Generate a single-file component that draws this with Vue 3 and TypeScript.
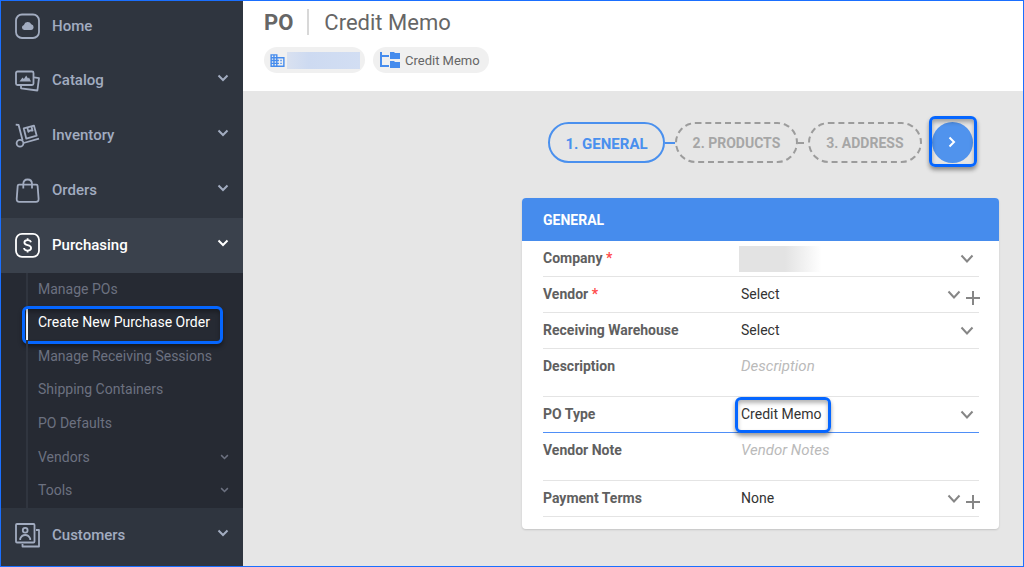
<script setup lang="ts">
import { ref } from 'vue'

type IconName = 'home' | 'catalog' | 'inventory' | 'orders' | 'purchasing' | 'customers'

interface SubItem {
  label: string
  expandable?: boolean
  current?: boolean
}

interface NavItem {
  label: string
  icon: IconName
  expandable: boolean
  children?: SubItem[]
}

interface Field {
  id: string
  label: string
  kind: 'select' | 'note'
  value: string
  required?: boolean
  addable?: boolean
  masked?: boolean
  focused?: boolean
}

const nav: NavItem[] = [
  { label: 'Home', icon: 'home', expandable: false },
  { label: 'Catalog', icon: 'catalog', expandable: true },
  { label: 'Inventory', icon: 'inventory', expandable: true },
  { label: 'Orders', icon: 'orders', expandable: true },
  {
    label: 'Purchasing',
    icon: 'purchasing',
    expandable: true,
    children: [
      { label: 'Manage POs' },
      { label: 'Create New Purchase Order', current: true },
      { label: 'Manage Receiving Sessions' },
      { label: 'Shipping Containers' },
      { label: 'PO Defaults' },
      { label: 'Vendors', expandable: true },
      { label: 'Tools', expandable: true },
    ],
  },
  { label: 'Customers', icon: 'customers', expandable: true },
]

const steps = ['1. GENERAL', '2. PRODUCTS', '3. ADDRESS']
const step = ref(0)

const fields: Field[] = [
  { id: 'company', label: 'Company', kind: 'select', value: '', required: true, masked: true },
  { id: 'vendor', label: 'Vendor', kind: 'select', value: 'Select', required: true, addable: true },
  { id: 'warehouse', label: 'Receiving Warehouse', kind: 'select', value: 'Select' },
  { id: 'description', label: 'Description', kind: 'note', value: 'Description' },
  { id: 'po-type', label: 'PO Type', kind: 'select', value: 'Credit Memo', focused: true },
  { id: 'vendor-note', label: 'Vendor Note', kind: 'note', value: 'Vendor Notes' },
  { id: 'terms', label: 'Payment Terms', kind: 'select', value: 'None', addable: true },
]

function next(): void {
  step.value = Math.min(step.value + 1, steps.length - 1)
}
</script>

<template>
  <div class="app">
    <nav class="sidebar">
      <template v-for="item in nav" :key="item.label">
        <a href="#" class="nav-item" :class="{ open: item.children, home: item.icon === 'home' }">
          <svg class="nav-icon" viewBox="0 0 26 27" aria-hidden="true">
            <template v-if="item.icon === 'home'">
              <rect x="2" y="1.5" width="23" height="23.5" rx="6" />
              <path class="solid" d="M10.2 17a2.6 2.6 0 0 1-.3-5.1 4 4 0 0 1 7.4-.6 2.9 2.9 0 0 1-.1 5.7z" />
            </template>
            <template v-else-if="item.icon === 'catalog'">
              <rect x="2" y="4.5" width="17.5" height="13.5" rx="1.5" />
              <path d="M20 10.3l5 .9-1.6 12.3L7 21.3v-3" />
              <path class="solid" d="M5.5 14.5l3-4 1.4 1.5 2.3-3.5 1.8 3 1-1 2 4z" />
            </template>
            <template v-else-if="item.icon === 'inventory'">
              <path d="M1.7 2.7l2.9.3 4 15.4" />
              <circle cx="6" cy="21.3" r="3.4" />
              <path d="M9.5 21L25 16.7M9.7 6.3L20 3.7l2.7 10-10.4 3z" />
              <path d="M13.3 5.6l1.1 4.2 1.8-1.5 2.4.4-1.2-4.2" />
            </template>
            <template v-else-if="item.icon === 'orders'">
              <path d="M5 7.7h17.3q1.2 0 1.3 1.2l1 13q.1 3-2.6 3H5.3q-2.7 0-2.6-3l1-13Q3.8 7.7 5 7.7z" />
              <path d="M9.3 11.5V7q0-4.5 4.3-4.5T18 7v4.5" />
            </template>
            <template v-else-if="item.icon === 'purchasing'">
              <rect x="2" y="1.8" width="23" height="23" rx="6" />
              <path d="M17 10.3q-.5-2.2-3.4-2.2-3.2 0-3.2 2.4 0 1.9 3.2 2.6 3.5.8 3.5 3 0 2.5-3.5 2.5-3.3 0-3.6-2.6M13.6 6.3v1.8M13.6 18.6v1.8" />
            </template>
            <template v-else>
              <rect x="2" y="2" width="18.5" height="18.5" rx="1" />
              <path d="M22 8h3v16.5H8.5V22" />
              <circle cx="11.2" cy="8.3" r="2.4" />
              <path d="M6.2 18v-1.3q1.5-3.7 5-3.7t5 3.7V18" />
            </template>
          </svg>
          <span class="nav-label">{{ item.label }}</span>
          <svg v-if="item.expandable" class="nav-chevron" viewBox="0 0 12 8" aria-hidden="true">
            <path d="M1.5 1.5L6 6l4.5-4.5" />
          </svg>
        </a>
        <ul v-if="item.children" class="submenu">
          <li v-for="sub in item.children" :key="sub.label" :class="{ current: sub.current }">
            <a href="#">
              <span>{{ sub.label }}</span>
              <svg v-if="sub.expandable" class="sub-chevron" viewBox="0 0 12 8" aria-hidden="true">
                <path d="M1.5 1.5L6 6l4.5-4.5" />
              </svg>
            </a>
          </li>
        </ul>
      </template>
    </nav>

    <div class="page">
      <header class="top">
        <h1><strong>PO</strong><span class="title">Credit Memo</span></h1>
        <div class="chips">
          <span class="chip company-chip">
            <svg class="building" viewBox="0 0 24 24" aria-hidden="true">
              <path d="M12 7V3H2v18h20V7H12zM6 19H4v-2h2v2zm0-4H4v-2h2v2zm0-4H4V9h2v2zm0-4H4V5h2v2zm4 12H8v-2h2v2zm0-4H8v-2h2v2zm0-4H8V9h2v2zm0-4H8V5h2v2zm10 12h-8v-2h2v-2h-2v-2h2v-2h-2V9h8v10zm-2-8h-2v2h2v-2zm0 4h-2v2h2v-2z" />
            </svg>
            <span class="chip-mask"></span>
          </span>
          <span class="chip">
            <svg class="tree" viewBox="0 0 20 18" aria-hidden="true">
              <path d="M0 1h2v3h7v2H2v8h7v2H0zM10 1h4l1 1h5v6H10zM10 10h4l1 1h5v6H10z" />
            </svg>
            <span>Credit Memo</span>
          </span>
        </div>
      </header>

      <main class="content">
        <div class="steps">
          <template v-for="(name, i) in steps" :key="name">
            <span v-if="i > 0" class="link" :class="{ done: i === 1 }"></span>
            <button type="button" class="step" :class="{ active: i === step }" @click="step = i">{{ name }}</button>
          </template>
          <div class="next-wrap">
            <button type="button" class="next" aria-label="Next" @click="next">
              <svg viewBox="0 0 8 12" aria-hidden="true"><path d="M1.5 1.5L6 6l-4.5 4.5" /></svg>
            </button>
          </div>
        </div>

        <section class="card">
          <h2>GENERAL</h2>
          <form class="fields" @submit.prevent>
            <div v-for="f in fields" :key="f.id" class="field" :class="[f.kind, { focused: f.focused }]">
              <label :for="f.id">{{ f.label }} <span v-if="f.required" class="star">*</span></label>
              <textarea v-if="f.kind === 'note'" :id="f.id" :placeholder="f.value"></textarea>
              <div v-else class="control">
                <div class="select-box">
                  <select :id="f.id">
                    <option>{{ f.value }}</option>
                  </select>
                  <span v-if="f.masked" class="mask"></span>
                  <svg class="chevron" viewBox="0 0 14 10" aria-hidden="true"><path d="M1.5 1.5L7 7.5l5.5-6" /></svg>
                </div>
                <button v-if="f.addable" type="button" class="add" :aria-label="'Add ' + f.label">
                  <svg viewBox="0 0 14 14" aria-hidden="true"><path d="M7 0v14M0 7h14" /></svg>
                </button>
              </div>
            </div>
          </form>
        </section>
      </main>
    </div>
  </div>
</template>

<style>
body {
  margin: 0;
}
</style>

<style scoped>
.app,
.app *,
.app *::after {
  box-sizing: border-box;
}

.app {
  display: grid;
  grid-template-columns: 242px 1fr;
  min-height: 100vh;
  border: 1px solid #1a6fff;
  font-family: Roboto, "Liberation Sans", sans-serif;
  font-size: 14px;
  background: #e6e6e6;
}

button,
select,
textarea {
  font: inherit;
  margin: 0;
}

svg {
  flex: none;
}

.sidebar {
  background: #2f353f;
}

.nav-item {
  display: flex;
  align-items: center;
  gap: 12px;
  height: 55px;
  padding: 0 14px 0 13px;
  color: #a2acc0;
  font-size: 15px;
  font-weight: 500;
  line-height: 20px;
  text-decoration: none;
}

.nav-item.home {
  height: 51px;
  margin-bottom: 1px;
}

.nav-item.open {
  background: #3a414c;
  color: #fff;
}

.nav-label {
  padding-bottom: 2px;
}

.nav-icon {
  width: 26px;
  height: 27px;
  fill: none;
  stroke: currentColor;
  stroke-width: 1.8;
  stroke-linejoin: round;
}

.nav-icon .solid {
  fill: currentColor;
  stroke: none;
}

.nav-chevron,
.sub-chevron {
  width: 12px;
  height: 8px;
  margin: 0 0 5px auto;
  fill: none;
  stroke: currentColor;
  stroke-width: 2;
}

.submenu {
  display: grid;
  grid-auto-rows: 1fr;
  min-height: 235px;
  margin: 0;
  padding: 0 0 0 25px;
  list-style: none;
  background: #262a33;
}

.submenu li {
  position: relative;
  border-left: 2px solid #30353f;
}

.submenu a {
  display: flex;
  align-items: center;
  height: 100%;
  padding: 0 14px 2px 10px;
  color: #6c7180;
  line-height: 20px;
  text-decoration: none;
}

.submenu .current {
  border-left-color: #fff;
}

.submenu .current a {
  color: #fff;
}

.submenu .current::after {
  content: "";
  position: absolute;
  inset: -1px 20px -4px -6px;
  border: 3px solid #0566ff;
  border-radius: 6px;
  box-shadow: 0 3px 4px rgba(0, 0, 0, 0.4), inset 0 3px 4px rgba(0, 0, 0, 0.3);
  pointer-events: none;
}

.sub-chevron {
  width: 9px;
  height: 6px;
  margin-bottom: 0;
}

.page {
  display: flex;
  flex-direction: column;
}

.top {
  padding: 8px 20px 18px 21px;
  background: #fff;
  color: #666;
}

h1 {
  display: flex;
  align-items: center;
  height: 26px;
  margin: 0;
  font-size: 22px;
  font-weight: 400;
}

h1 strong {
  font-weight: 700;
}

.title {
  display: flex;
  align-items: center;
  height: 26px;
  margin-left: 14px;
  padding-left: 15px;
  border-left: 2px solid #d8d8d8;
}

.chips {
  display: flex;
  gap: 8px;
  margin-top: 12px;
}

.chip {
  display: flex;
  align-items: center;
  gap: 5px;
  height: 26px;
  padding: 0 9px 0 7px;
  border-radius: 13px;
  background: #f0f0f0;
  font-size: 13px;
}

.company-chip {
  gap: 1px;
  padding: 0 5px;
}

.chip svg {
  fill: #468ced;
}

.building {
  width: 17px;
  height: 17px;
}

.tree {
  width: 20px;
  height: 18px;
}

.chip-mask {
  width: 73px;
  height: 17px;
  background: linear-gradient(90deg, #d9e1f0, #cddaf1 30%, #d2def3);
}

.content {
  flex: 1;
  padding: 31px 24px 37px 279px;
}

.steps {
  display: flex;
  justify-content: center;
  align-items: center;
}

.step {
  height: 41px;
  padding: 0 16px;
  border: 2px dashed #9c9c9c;
  border-radius: 21px;
  background: none;
  color: #a6a6a6;
  font-weight: 700;
  white-space: nowrap;
}

.step.active {
  padding: 3px 15px 0;
  border: 2px solid #4a90ee;
  color: #4a90ee;
  font-size: 15px;
}

.link {
  width: 10px;
  height: 2px;
  background: linear-gradient(90deg, #9c9c9c 6px, transparent 6px);
}

.link.done {
  background: #4a90ee;
}

.next-wrap {
  position: relative;
  margin-left: 10px;
}

.next-wrap::after {
  content: "";
  position: absolute;
  inset: -6px -4px -4px -3px;
  border: 3px solid #0566ff;
  border-radius: 6px;
  box-shadow: 0 3px 4px rgba(0, 0, 0, 0.4), inset 0 3px 4px rgba(0, 0, 0, 0.3);
  pointer-events: none;
}

.next {
  display: grid;
  place-items: center;
  width: 41px;
  height: 41px;
  padding: 0;
  border: 0;
  border-radius: 50%;
  background: #5093ed;
}

.next svg {
  width: 8px;
  height: 12px;
  margin-bottom: 2px;
  fill: none;
  stroke: #fff;
  stroke-width: 2;
}

.card {
  margin-top: 35px;
  padding-bottom: 12px;
  border-radius: 4px;
  background: #fff;
  box-shadow: 0 1px 2px rgba(0, 0, 0, 0.15);
}

h2 {
  margin: 0;
  padding: 12px 21px 11px;
  border-radius: 4px 4px 0 0;
  background: #468ced;
  color: #fff;
  font-size: 14px;
  font-weight: 700;
  line-height: 20px;
}

.fields {
  padding: 0 20px 0 21px;
}

.field {
  display: grid;
  grid-template-columns: 198px 1fr;
  height: 36px;
  border-bottom: 1px solid #e4e4e4;
}

.field.note {
  height: 48px;
}

.field.focused {
  border-bottom-color: #4f8ff7;
}

label {
  color: #606060;
  font-weight: 700;
  line-height: 34px;
}

.star {
  color: #ff4b4b;
}

.control {
  display: flex;
  align-items: center;
}

.select-box {
  position: relative;
  display: grid;
  flex: 1;
  align-items: center;
  height: 100%;
}

.select-box > * {
  grid-area: 1 / 1;
}

.focused .select-box::after {
  content: "";
  position: absolute;
  top: 0;
  bottom: -1px;
  left: -6px;
  width: 96px;
  border: 3px solid #0566ff;
  border-radius: 6px;
  box-shadow: 0 3px 4px rgba(0, 0, 0, 0.4), inset 0 3px 4px rgba(0, 0, 0, 0.3);
  pointer-events: none;
}

select {
  appearance: none;
  width: 100%;
  height: 34px;
  padding: 0 0 1px;
  border: 0;
  outline: 0;
  background: none;
  color: #333;
}

.mask {
  width: 92px;
  height: 26px;
  margin-left: -2px;
  background: linear-gradient(90deg, #e3e3e3 50%, #fff 90%);
  pointer-events: none;
}

.chevron {
  justify-self: end;
  width: 14px;
  height: 10px;
  margin-right: 5px;
  fill: none;
  stroke: #868686;
  stroke-width: 2;
  pointer-events: none;
}

.add {
  display: grid;
  place-items: end;
  width: 14px;
  height: 20px;
  margin-right: -1px;
  padding: 0;
  border: 0;
  background: none;
}

.add svg {
  width: 14px;
  height: 14px;
  stroke: #868686;
  stroke-width: 2;
}

textarea {
  width: 100%;
  height: 47px;
  padding: 7px 0;
  border: 0;
  outline: 0;
  resize: none;
  background: none;
  color: #333;
  font-size: 15px;
  line-height: 20px;
}

textarea::placeholder {
  color: #bababa;
  font-style: italic;
  opacity: 1;
}
</style>
